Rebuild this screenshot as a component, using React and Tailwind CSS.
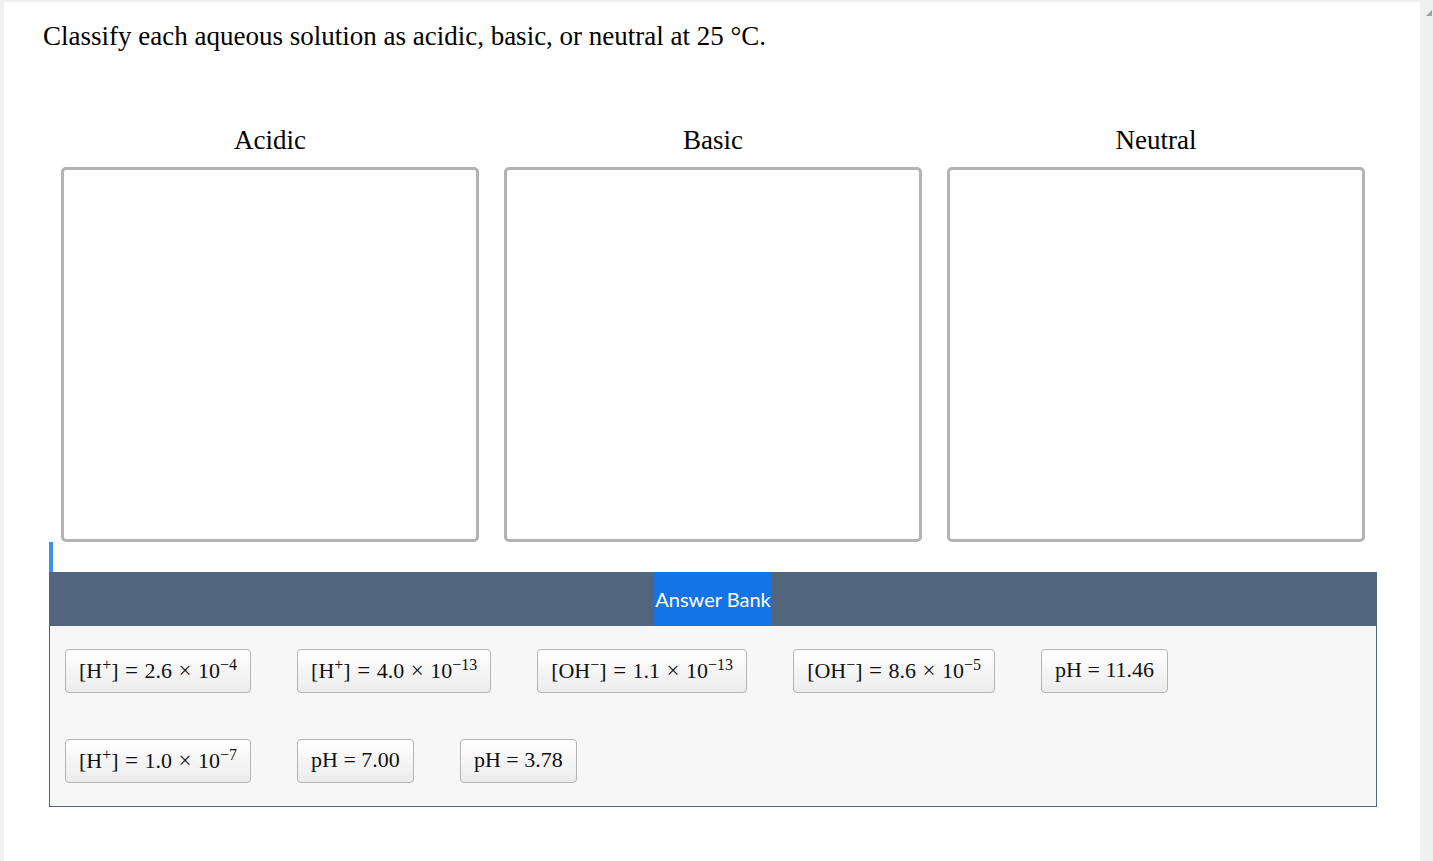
const serif = { fontFamily: '"Liberation Serif", "Times New Roman", serif' };

function Sup({ children }) {
  return <span className="text-[16px] relative -top-[8px]">{children}</span>;
}

function Op({ children }) {
  return <span className="mx-[1px] text-[23px]">{children}</span>;
}

function Conc({ ion, charge, mant, exp }) {
  return (
    <>
      [{ion}
      <Sup>{charge}</Sup>] <Op>=</Op> {mant} <Op>×</Op> 10<Sup>{exp}</Sup>
    </>
  );
}

const row1 = [
  <Conc ion="H" charge="+" mant="2.6" exp="−4" />,
  <Conc ion="H" charge="+" mant="4.0" exp="−13" />,
  <Conc ion="OH" charge="−" mant="1.1" exp="−13" />,
  <Conc ion="OH" charge="−" mant="8.6" exp="−5" />,
  <>pH = 11.46</>,
];

const row2 = [
  <Conc ion="H" charge="+" mant="1.0" exp="−7" />,
  <>pH = 7.00</>,
  <>pH = 3.78</>,
];

function Chip({ children }) {
  return (
    <div
      className="h-[44px] px-[13px] flex items-center rounded-[4px] border border-[#b5b5b5] bg-gradient-to-b from-white to-[#ececec] text-[22px] text-[#111] whitespace-nowrap"
      style={serif}
    >
      <span className="leading-none -mt-[2px]">{children}</span>
    </div>
  );
}

export default function App() {
  const columns = ["Acidic", "Basic", "Neutral"];
  return (
    <div className="w-[1433px] h-[861px] flex bg-[#f0f0f0] overflow-hidden">
      <div className="flex-1 ml-[4px] mt-[2px] bg-white">
        <h1 className="pl-[39px] pt-[16px] text-[27px] leading-[36px] text-black" style={serif}>
          Classify each aqueous solution as acidic, basic, or neutral at 25 °C.
        </h1>

        <div className="flex gap-[25px] pl-[57px] mt-[71px]">
          {columns.map((c) => (
            <div key={c} className="w-[418px] flex flex-col">
              <div className="text-center text-[27px] leading-[30px] text-black" style={serif}>
                {c}
              </div>
              <div className="mt-[12px] h-[375px] border-[3px] border-[#b3b3b3] rounded-[5px] bg-white" />
            </div>
          ))}
        </div>

        <div className="ml-[45px] w-[1328px]">
          <div className="w-[4px] h-[30px] bg-[#3b8ef3]" />
          <div className="border border-t-0 border-[#51657d]">
            <div className="h-[54px] bg-[#51657d] flex justify-center">
              <div
                className="h-[53px] px-[1px] bg-[#1473e6] text-white text-[20px] flex items-center"
                style={{ fontFamily: 'Lato, "Noto Sans", sans-serif' }}
              >
                Answer Bank
              </div>
            </div>
            <div className="bg-[#f7f7f7] pl-[15px] pt-[23px] pb-[23px] flex flex-col gap-[46px]">
              <div className="flex gap-[46px]">
                {row1.map((r, i) => (
                  <Chip key={i}>{r}</Chip>
                ))}
              </div>
              <div className="flex gap-[46px]">
                {row2.map((r, i) => (
                  <Chip key={i}>{r}</Chip>
                ))}
              </div>
            </div>
          </div>
        </div>
      </div>
      <div className="w-[13px] relative">
        <div className="absolute top-[10px] left-[6px] w-0 h-0 border-l-[6px] border-l-transparent border-b-[6px] border-b-[#a3a3a3]" />
      </div>
    </div>
  );
}
